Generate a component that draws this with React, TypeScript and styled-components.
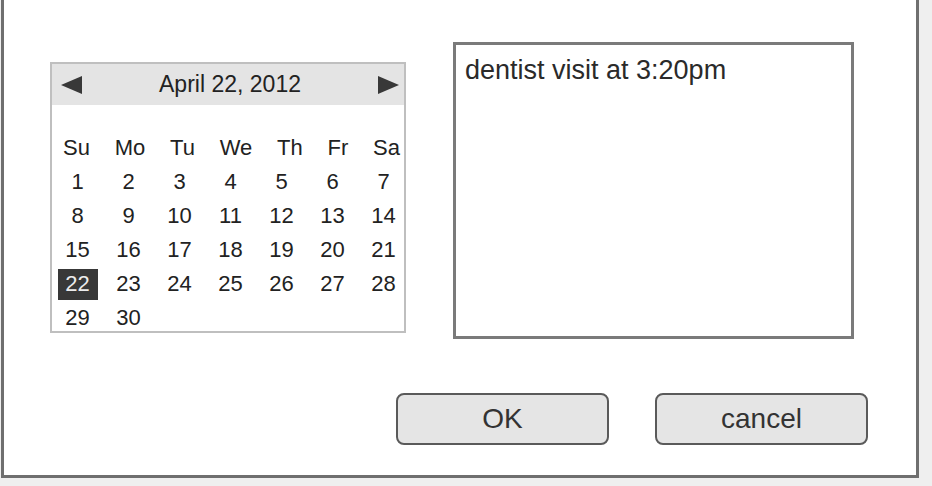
import React from 'react';
import styled, { createGlobalStyle } from 'styled-components';

const GlobalStyle = createGlobalStyle`
  html, body {
    margin: 0;
    padding: 0;
    background: #efefef;
    font-family: 'Liberation Sans', Arial, sans-serif;
    color: #222;
  }
`;

const Frame = styled.div`
  box-sizing: border-box;
  width: 918px;
  height: 478px;
  margin-left: 1px;
  background: #fff;
  border: 3px solid #6f6f6f;
  border-top: none;
  padding: 42px 48px 0 46px;
  display: flex;
  flex-direction: column;
`;

const TopRow = styled.div`
  display: flex;
  align-items: flex-start;
  gap: 47px;
`;

const Calendar = styled.div`
  box-sizing: border-box;
  width: 356px;
  height: 271px;
  margin-top: 20px;
  border: 2px solid #bfbfbf;
  display: flex;
  flex-direction: column;

  & > * {
    flex-shrink: 0;
  }
`;

const CalHeader = styled.div`
  height: 41px;
  background: #e4e4e4;
  display: flex;
  align-items: center;
  justify-content: space-between;
  padding: 0 5px 0 9px;
`;

const Title = styled.span`
  font-size: 23px;
  color: #222;
`;

const Arrow = styled.svg`
  width: 22px;
  height: 20px;
  display: block;
  fill: #383838;
`;

const DayNames = styled.div`
  margin-top: 26px;
  height: 34px;
  display: flex;
  align-items: center;
  justify-content: space-between;
  padding: 0 4px 0 11px;
  font-size: 22px;
`;

const DateGrid = styled.div`
  display: grid;
  grid-template-columns: repeat(7, 51px);
  grid-auto-rows: 34px;
`;

const DateCell = styled.div<{ $selected?: boolean }>`
  display: flex;
  align-items: center;
  justify-content: center;
  font-size: 22px;

  span {
    display: flex;
    align-items: center;
    justify-content: center;
    width: 40px;
    height: 31px;
    background: ${({ $selected }) => ($selected ? '#383838' : 'transparent')};
    color: ${({ $selected }) => ($selected ? '#ececec' : '#222')};
  }
`;

const Note = styled.div`
  box-sizing: border-box;
  width: 401px;
  height: 297px;
  border: 3px solid #7a7a7a;
  padding: 12px 9px;
  font-size: 27px;
  line-height: 1;
  color: #2a2a2a;
`;

const ButtonRow = styled.div`
  display: flex;
  justify-content: flex-end;
  gap: 46px;
  margin-top: 54px;
`;

const Button = styled.button`
  box-sizing: border-box;
  width: 213px;
  height: 52px;
  border: 2px solid #5a5a5a;
  border-radius: 8px;
  background: #e5e5e5;
  font-family: 'Liberation Sans', Arial, sans-serif;
  font-size: 28px;
  color: #333;
  padding: 0;
`;

const dayNames = ['Su', 'Mo', 'Tu', 'We', 'Th', 'Fr', 'Sa'];
const dates = Array.from({ length: 30 }, (_, i) => i + 1);

export default function App() {
  return (
    <>
      <GlobalStyle />
      <Frame>
        <TopRow>
          <Calendar>
            <CalHeader>
              <Arrow viewBox="0 0 22 20">
                <polygon points="0,10 21,1 21,19" />
              </Arrow>
              <Title>April 22, 2012</Title>
              <Arrow viewBox="0 0 22 20">
                <polygon points="22,10 1,1 1,19" />
              </Arrow>
            </CalHeader>
            <DayNames>
              {dayNames.map((d) => (
                <span key={d}>{d}</span>
              ))}
            </DayNames>
            <DateGrid>
              {dates.map((n) => (
                <DateCell key={n} $selected={n === 22}>
                  <span>{n}</span>
                </DateCell>
              ))}
            </DateGrid>
          </Calendar>
          <Note>dentist visit at 3:20pm</Note>
        </TopRow>
        <ButtonRow>
          <Button>OK</Button>
          <Button>cancel</Button>
        </ButtonRow>
      </Frame>
    </>
  );
}
